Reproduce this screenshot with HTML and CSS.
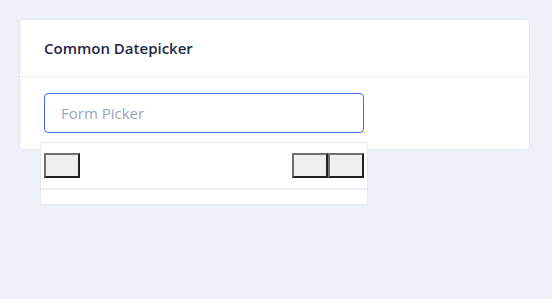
FILE: index.html
```html
<!DOCTYPE html>
<html lang="en">
<head>
<meta charset="utf-8">
<title>Common Datepicker</title>
<link rel="stylesheet" href="styles.css">
</head>
<body>
<div class="page">
  <div class="card">
    <div class="card-header">
      <h4 class="card-title">Common Datepicker</h4>
    </div>
    <div class="card-body">
      <div class="picker">
        <input class="form-input" type="text" placeholder="Form Picker">
        <div class="popup">
          <div class="popup-head">
            <button class="nav-btn" type="button"></button>
            <div class="nav-group">
              <button class="nav-btn" type="button"></button>
              <button class="nav-btn" type="button"></button>
            </div>
          </div>
          <div class="popup-body"></div>
        </div>
      </div>
    </div>
  </div>
</div>
</body>
</html>
```
FILE: styles.css
```css
html, body {
  margin: 0;
  padding: 0;
  background: #edf0f7;
  font-family: "Open Sans", "Noto Sans", sans-serif;
}
.page {
  padding: 20px 0 0 20px;
  height: 299px;
  box-sizing: border-box;
}
.card {
  width: 509px;
  background: #fff;
  border-radius: 4px;
  box-shadow: 0 0 0 1px #e5e8f0;
}
.card-header {
  height: 57px;
  box-sizing: border-box;
  padding: 0 24px;
  display: flex;
  align-items: center;
  border-bottom: 1px solid #eceff5;
}
.card-title {
  margin: 0;
  font-size: 15px;
  font-weight: 600;
  color: #1f2944;
  letter-spacing: 0;
}
.card-body {
  padding: 16px 24px;
}
.picker {
  position: relative;
  width: 320px;
}
.form-input {
  display: block;
  width: 320px;
  height: 40px;
  box-sizing: border-box;
  border: 1px solid #3d6df0;
  border-radius: 4px;
  padding: 0 16px;
  font-family: "Open Sans", "Noto Sans", sans-serif;
  font-size: 15px;
  color: #1f2944;
  outline: none;
  background: #fff;
}
.form-input::placeholder {
  color: #9aa6bd;
}
.popup {
  position: absolute;
  top: 49px;
  left: -4px;
  width: 328px;
  box-sizing: border-box;
  background: #fff;
  border: 1px solid #e4e8f0;
  border-radius: 4px;
}
.popup-head {
  display: flex;
  justify-content: space-between;
  align-items: center;
  padding: 10px 3px;
  border-bottom: 2px solid #eef0f5;
}
.nav-group {
  display: flex;
}
.nav-btn {
  width: 36px;
  height: 25px;
  padding: 0;
  margin: 0;
  box-sizing: border-box;
  background: #efefef;
  border-style: solid;
  border-width: 2px;
  border-color: #707070 #222 #222 #707070;
  border-radius: 0;
}
.popup-body {
  height: 14px;
}
```
